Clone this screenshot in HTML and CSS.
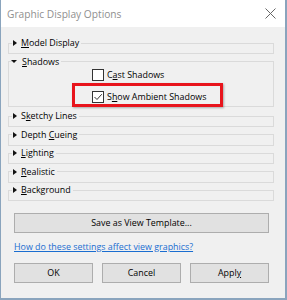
FILE: index.html
```html
<!DOCTYPE html>
<html>
<head>
<meta charset="utf-8">
<link rel="stylesheet" href="styles.css">
</head>
<body>
<div class="window">
  <div class="titlebar">
    <span class="title">Graphic Display Options</span>
    <svg class="close" width="11" height="11" viewBox="0 0 11 11"><path d="M0.5 0.5 L10.5 10.5 M10.5 0.5 L0.5 10.5" stroke="#666" stroke-width="1" fill="none"/></svg>
  </div>
  <div class="body">
    <div class="sections">
      <fieldset class="sec">
        <legend><span class="tri right"></span><span><u>M</u>odel Display</span></legend>
      </fieldset>
      <fieldset class="sec open">
        <legend><span class="tri down"></span><span><u>S</u>hadows</span></legend>
        <div class="opt"><span class="cb"></span><span>C<u>a</u>st Shadows</span></div>
        <div class="opt second"><span class="cb"><svg width="10" height="10" viewBox="0 0 10 10"><path d="M1.5 5 L4 7.5 L8.8 2.2" stroke="#333" stroke-width="1" fill="none"/></svg></span><span>S<u>h</u>ow Ambient Shadows</span><span class="redbox"></span></div>
      </fieldset>
      <fieldset class="sec gap">
        <legend><span class="tri right"></span><span>S<u>k</u>etchy Lines</span></legend>
      </fieldset>
      <fieldset class="sec">
        <legend><span class="tri right"></span><span>Depth <u>C</u>ueing</span></legend>
      </fieldset>
      <fieldset class="sec">
        <legend><span class="tri right"></span><span><u>L</u>ighting</span></legend>
      </fieldset>
      <fieldset class="sec">
        <legend><span class="tri right"></span><span><u>R</u>ealistic</span></legend>
      </fieldset>
      <fieldset class="sec">
        <legend><span class="tri right"></span><span><u>B</u>ackground</span></legend>
      </fieldset>
    </div>
    <div class="actions">
      <button class="btn wide">Save as View Template...</button>
      <a class="link" href="#">How do these settings affect view graphics?</a>
      <div class="row">
        <button class="btn">OK</button>
        <button class="btn">Cancel</button>
        <button class="btn">Appl<u>y</u></button>
      </div>
    </div>
  </div>
</div>
</body>
</html>
```
FILE: styles.css
```css
* { box-sizing: border-box; }
html, body { margin: 0; padding: 0; background: #f0f0f0; }
.window {
  width: 287px;
  height: 300px;
  border-left: 1px solid #8aa4bd;
  border-right: 2px solid #8aa4bd;
  border-bottom: 2px solid #8aa4bd;
  background: #f0f0f0;
  font-family: "Open Sans", "Noto Sans", sans-serif;
  font-size: 8.9px;
  color: #000;
  display: flex;
  flex-direction: column;
}
.titlebar {
  height: 27px;
  background: #fff;
  display: flex;
  align-items: center;
  justify-content: space-between;
  padding: 0 9px 0 6px;
}
.title {
  font-size: 10.2px;
  color: #8f8f8f;
}
.close { display: block; }
.body { padding-top: 10px; }
.sections {
  padding: 0 11px 0 7px;
  display: flex;
  flex-direction: column;
}
.sec {
  margin: 0 0 1.5px 0;
  padding: 0 0 4px 0;
  border: 1px solid #dadada;
  min-width: 0;
}
.sec.open { padding-bottom: 2.5px; }
.sec.gap { margin-top: 1.5px; }
.sec legend {
  margin-left: 3px;
  padding: 0 2px 0 1px;
  line-height: 12px;
  height: 12px;
  display: flex;
  align-items: center;
}
.tri {
  display: inline-block;
  width: 0;
  height: 0;
  margin-right: 4px;
}
.tri.right {
  border-top: 3.5px solid transparent;
  border-bottom: 3.5px solid transparent;
  border-left: 4px solid #111;
}
.tri.down {
  border-left: 3px solid transparent;
  border-right: 3px solid transparent;
  border-top: 3px solid #111;
  margin-left: -2px;
  margin-right: 5px;
}
.opt {
  height: 14px;
  padding-left: 83px;
  display: flex;
  align-items: center;
  position: relative;
}
.opt.second { margin-top: 8px; }
.cb {
  width: 12px;
  height: 12px;
  border: 1px solid #333;
  background: #fff;
  margin-right: 3px;
  display: flex;
  align-items: center;
  justify-content: center;
}
.cb svg { display: block; }
.redbox {
  position: absolute;
  left: 63px;
  top: -6.5px;
  width: 151px;
  height: 24px;
  border: 3px solid #e8141c;
  box-shadow: 1px 1px 2px rgba(0,0,0,0.3);
}
.actions {
  padding: 0 15px 0 13px;
  display: flex;
  flex-direction: column;
}
.btn {
  font-family: inherit;
  font-size: 8.9px;
  color: #000;
  background: #e1e1e1;
  border: 1px solid #adadad;
  height: 20px;
  padding: 0;
  margin: 0;
}
.btn.wide { margin-top: 10px; width: 255px; }
.link {
  margin-top: 7px;
  line-height: 14px;
  color: #1a6dd0;
  text-decoration: underline;
  align-self: flex-start;
}
.row {
  margin-top: 9px;
  display: flex;
  gap: 9px;
}
.row .btn { width: 79px; }
```
